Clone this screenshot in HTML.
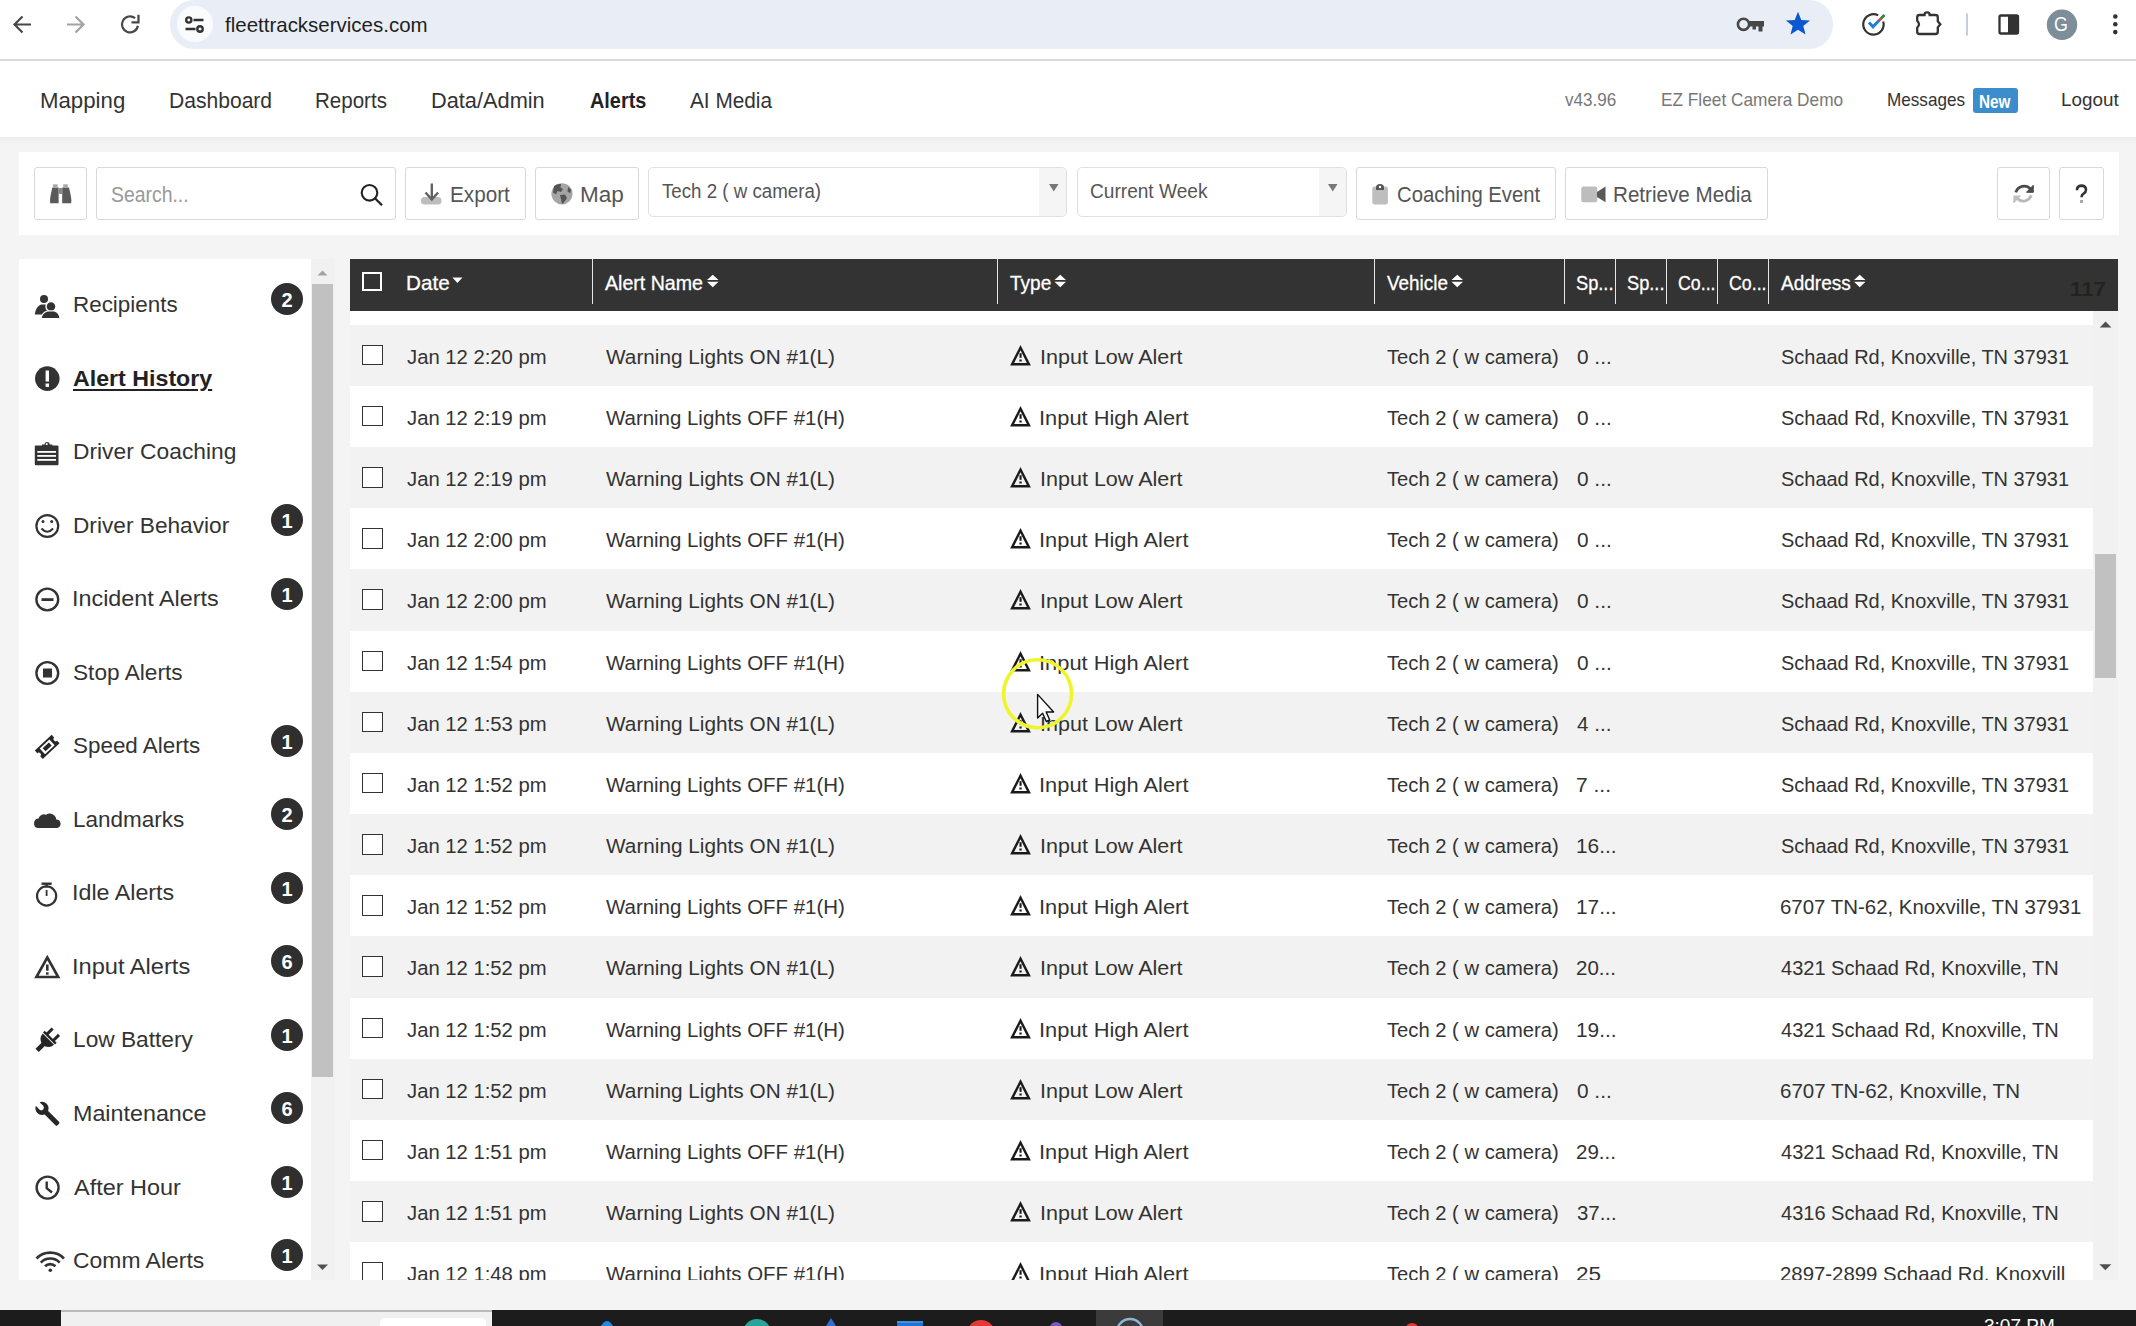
<!DOCTYPE html>
<html><head><meta charset="utf-8">
<style>
*{box-sizing:border-box;margin:0;padding:0}
html,body{width:2136px;height:1326px;overflow:hidden;background:#f4f4f4;font-family:"Liberation Sans",sans-serif;color:#333}
.a{position:absolute}
.t{position:absolute;white-space:nowrap;line-height:1;transform-origin:0 0}
.btn{position:absolute;top:167px;height:53px;background:#fff;border:1.5px solid #d9d9d9;border-radius:3px}
.sel{position:absolute;top:167px;height:50px;background:#fff;border:1.5px solid #e0e0e0;border-radius:5px;overflow:hidden}
.bd{position:absolute;left:271px;width:32px;height:32px;border-radius:50%;background:#2f2f2f;color:#fff;font-weight:bold;font-size:20px;line-height:35px;text-align:center}
.cb{position:absolute;left:362px;width:20.5px;height:20.5px;border:1.6px solid #333;background:#fff}

</style></head><body>
<div class="a" style="left:0;top:0;width:2136px;height:59px;background:#fff"></div>
<div class="a" style="left:170px;top:0px;width:1663px;height:49px;background:#e9eef6;border-radius:24px"></div>
<div class="a" style="left:0;top:59px;width:2136px;height:2px;background:#d9dadc"></div>
<div class="a" style="left:176.5px;top:6.2px;width:36px;height:36px;border-radius:50%;background:#fafbfd"></div>
<svg class="a" style="left:0;top:0" width="2136" height="59" viewBox="0 0 2136 59">
 <g fill="none" stroke-linecap="butt" stroke-linejoin="miter">
  <path d="M31 24.5 H14.5 M22.5 16.5 L14.5 24.5 L22.5 32.5" stroke="#474747" stroke-width="2.2"/>
  <path d="M67 24.5 H83.5 M75.5 16.5 L83.5 24.5 L75.5 32.5" stroke="#a3a3a3" stroke-width="2.2"/>
  <path d="M137.9 25.7 A8 8 0 1 1 135.1 18.2" stroke="#474747" stroke-width="2.2"/>
  <path d="M131.5 22.4 H138.5 V14.8" stroke="#474747" stroke-width="2.2"/>
  <circle cx="188.8" cy="20" r="2.6" stroke="#333" stroke-width="2.4"/>
  <path d="M193.5 20 H203.5 M185.5 29 H195.5" stroke="#333" stroke-width="2.5"/>
  <circle cx="200" cy="29" r="2.7" stroke="#333" stroke-width="2.4"/>
  <circle cx="1743.5" cy="24.3" r="5.6" stroke="#474747" stroke-width="2.6"/>
  <path d="M1883.2 21.5 A10.2 10.2 0 1 1 1878.2 15.4" stroke="#333" stroke-width="2.2"/>
  <path d="M1919.5 15 H1924.5 A2.6 2.6 0 0 1 1929.7 15 H1935.5 Q1937.8 15 1937.8 17.3 V21.3 L1940.3 24.3 L1937.8 27.3 V31.8 Q1937.8 34 1935.5 34 H1919.5 Q1917.2 34 1917.2 31.8 V27.8 Q1920.8 24.3 1917.2 20.8 V17.3 Q1917.2 15 1919.5 15 Z" stroke="#333" stroke-width="2.3"/>
  <rect x="1999.5" y="15.5" width="18.5" height="18" rx="1.5" stroke="#333" stroke-width="2.3"/>
 </g>
 <path d="M1749 21 H1764 V26.5 H1762.5 V31.5 H1758.5 V26.5 H1756 V29.5 H1752.5 V26.5 H1749 Z" fill="#474747"/>
 <path d="M1798 11.8 L1801.3 20.1 L1810 20.5 L1803.3 26.1 L1805.5 34.6 L1798 29.8 L1790.5 34.6 L1792.7 26.1 L1786 20.5 L1794.7 20.1 Z" fill="#0b57d0"/>
 <path d="M1869 22.5 L1873 26.8 L1879 20.5" fill="none" stroke="#1a80d8" stroke-width="3"/>
 <path d="M1878.6 21 L1881.5 18" fill="none" stroke="#c0504d" stroke-width="2.8"/>
 <path d="M1881.2 18.3 L1884.6 15" fill="none" stroke="#2e8b3a" stroke-width="2.8"/>
 <rect x="1966" y="13.5" width="2" height="22" fill="#c4cfde"/>
 <rect x="2008" y="15.5" width="11" height="18" fill="#333"/>
 <circle cx="2062" cy="24.8" r="15.2" fill="#7b8e9a"/>
 <circle cx="2115.3" cy="16.5" r="2.3" fill="#333"/>
 <circle cx="2115.3" cy="24.3" r="2.3" fill="#333"/>
 <circle cx="2115.3" cy="32.1" r="2.3" fill="#333"/>
</svg>
<div class="t" style="left:2053.5px;top:13px;font-size:21px;color:#fff;transform:scaleX(0.85)">G</div>

<div class="t" style="left:224.71px;top:13.92px;font-size:21px;color:#1f1f1f;transform:scaleX(0.9755);">fleettrackservices.com</div>
<div class="a" style="left:0;top:61px;width:2136px;height:76px;background:#fff"></div>
<div class="a" style="left:0;top:137px;width:2136px;height:6px;background:linear-gradient(#ececec,#f4f4f4)"></div>
<div class="t" style="left:40.18px;top:91.00px;font-size:21.5px;color:#333;transform:scaleX(1.0337);">Mapping</div>
<div class="t" style="left:169.27px;top:91.00px;font-size:21.5px;color:#333;transform:scaleX(0.9801);">Dashboard</div>
<div class="t" style="left:315.31px;top:91.00px;font-size:21.5px;color:#333;transform:scaleX(0.9554);">Reports</div>
<div class="t" style="left:431.21px;top:91.00px;font-size:21.5px;color:#333;transform:scaleX(1.0122);">Data/Admin</div>
<div class="t" style="left:589.51px;top:91.00px;font-size:21.5px;color:#222;font-weight:bold;transform:scaleX(0.9240);">Alerts</div>
<div class="t" style="left:690.46px;top:91.00px;font-size:21.5px;color:#333;transform:scaleX(0.9669);">AI Media</div>
<div class="t" style="left:1565.44px;top:90.22px;font-size:19px;color:#777;transform:scaleX(0.8994);">v43.96</div>
<div class="t" style="left:1660.58px;top:90.22px;font-size:19px;color:#777;transform:scaleX(0.9079);">EZ Fleet Camera Demo</div>
<div class="t" style="left:1887.10px;top:90.22px;font-size:19px;color:#333;transform:scaleX(0.9010);">Messages</div>
<div class="t" style="left:2061.45px;top:90.22px;font-size:19px;color:#333;transform:scaleX(0.9926);">Logout</div>
<div class="a" style="left:1973px;top:88px;width:45px;height:25px;background:#3c8dcb;border-radius:3px"></div>
<div class="t" style="left:1979.48px;top:93.26px;font-size:18px;color:#fff;font-weight:bold;transform:scaleX(0.8510);">New</div>
<div class="a" style="left:18.5px;top:152px;width:2100.5px;height:83px;background:#fff"></div>
<div class="btn" style="left:34px;width:53px"></div>
<div class="btn" style="left:96px;width:300px"></div>
<div class="btn" style="left:405px;width:121px"></div>
<div class="btn" style="left:535px;width:104px"></div>
<div class="btn" style="left:1356px;width:200px"></div>
<div class="btn" style="left:1565px;width:203px"></div>
<div class="btn" style="left:1997px;width:53px"></div>
<div class="btn" style="left:2059px;width:45px"></div>
<div class="sel" style="left:648px;width:419px"><div class="a" style="right:0;top:0;width:27px;height:100%;background:#f5f5f5;border-radius:0 5px 5px 0"></div></div>
<div class="sel" style="left:1077px;width:270px"><div class="a" style="right:0;top:0;width:27px;height:100%;background:#f5f5f5;border-radius:0 5px 5px 0"></div></div>
<svg class="a" style="left:0;top:150px" width="2136" height="80" viewBox="0 150 2136 80">
 <!-- binoculars -->
 <path d="M52.3 187.5 H58.6 V203.2 H50.2 Q49.8 200 50.5 196 Z" fill="#5a5a5a"/>
 <path d="M69 187.5 H62.2 V203.2 H71.2 Q71.6 200 70.9 196 Z" fill="#5a5a5a"/>
 <rect x="58.4" y="188" width="4" height="6" fill="#8a8a8a"/>
 <rect x="53" y="184.3" width="4.6" height="3.5" fill="#a8a8a8"/>
 <rect x="63.2" y="184.3" width="4.6" height="3.5" fill="#a8a8a8"/>
 <!-- search -->
 <circle cx="369.5" cy="192.8" r="7.8" fill="none" stroke="#222" stroke-width="2.1"/>
 <path d="M375.2 198.5 L382 205.3" stroke="#222" stroke-width="2.3"/>
 <!-- export -->
 <rect x="421" y="197" width="20.5" height="7.5" rx="3.5" fill="#bdbdbd"/>
 <path d="M431.8 183.5 V198" stroke="#626262" stroke-width="2.4"/>
 <path d="M425.5 192.5 L431.8 199.5 L438.1 192.5" fill="none" stroke="#626262" stroke-width="2.4"/>
 <!-- globe -->
 <circle cx="562" cy="193.8" r="10.6" fill="#a5a5a5"/>
 <path d="M554 186 Q557 183.5 561 184 L560.5 187.5 L563 189 L561 192 L557.5 191 L556 194.5 L553 192.5 Z" fill="#555"/>
 <path d="M560 195 L565 194.5 L567 198 L563.5 203 L562 204 L561 199 Z" fill="#555"/>
 <path d="M568 187 L571 189.5 L570.5 193 L567.5 192 Z" fill="#555"/>
 <!-- select arrows -->
 <path d="M1049 184 H1058.5 L1053.75 191.5 Z" fill="#777"/>
 <path d="M1328 184 H1337.5 L1332.75 191.5 Z" fill="#777"/>
 <!-- clipboard -->
 <rect x="1372.3" y="186.5" width="15.6" height="18" rx="2.2" fill="#bebebe"/>
 <path d="M1376 190 V187.5 Q1376 184 1380 184 Q1384 184 1384 187.5 V190 Z" fill="#555"/>
 <circle cx="1380" cy="187" r="1.2" fill="#fff"/>
 <!-- video -->
 <rect x="1581.3" y="186.5" width="16" height="15.7" rx="2" fill="#bdbdbd"/>
 <path d="M1597 192 L1605.5 186.5 V202.2 L1597 197 Z" fill="#595959"/>
 <!-- refresh -->
 <path d="M2015.8 192.3 A8.6 8.6 0 0 1 2030.5 189" fill="none" stroke="#4a4a4a" stroke-width="2.8"/>
 <path d="M2026.5 192.3 L2033.3 192.3 L2033.3 185.2 Z" fill="#4a4a4a" stroke="#4a4a4a" stroke-width="1"/>
 <path d="M2031.3 195.2 A8.6 8.6 0 0 1 2017.2 198.6" fill="none" stroke="#b8b8b8" stroke-width="2.8"/>
 <path d="M2020.3 196 L2013.8 196 L2013.8 202.8 Z" fill="#c0c0c0" stroke="#c0c0c0" stroke-width="1"/>
 <!-- help -->
 <path d="M2077 190.2 Q2076.8 185.8 2081.2 185.6 Q2086 185.6 2086 189.8 Q2086 192.2 2083.6 193.6 Q2081.5 194.8 2081.5 197.3" fill="none" stroke="#333" stroke-width="2.6"/>
 <rect x="2080" y="200" width="3" height="3" fill="#aaa"/>
 </svg>


<div class="t" style="left:111.12px;top:185.10px;font-size:21.5px;color:#999;transform:scaleX(0.9025);">Search...</div>
<div class="t" style="left:450.30px;top:185.10px;font-size:21.5px;color:#555;transform:scaleX(0.9632);">Export</div>
<div class="t" style="left:580.15px;top:185.10px;font-size:21.5px;color:#555;transform:scaleX(1.0470);">Map</div>
<div class="t" style="left:661.58px;top:180.77px;font-size:20px;color:#555;transform:scaleX(0.9355);">Tech 2 ( w camera)</div>
<div class="t" style="left:1090.03px;top:180.77px;font-size:20px;color:#555;transform:scaleX(0.9547);">Current Week</div>
<div class="t" style="left:1396.97px;top:184.70px;font-size:21.5px;color:#555;transform:scaleX(0.9433);">Coaching Event</div>
<div class="t" style="left:1613.31px;top:184.70px;font-size:21.5px;color:#555;transform:scaleX(0.9592);">Retrieve Media</div>
<div class="a" style="left:19px;top:259px;width:292px;height:1021px;background:#fff"></div>
<div class="a" style="left:311px;top:259px;width:24px;height:1021px;background:#f1f1f1"></div>
<div class="a" style="left:312px;top:284px;width:21px;height:793px;background:#c1c1c1"></div>
<div class="t" style="left:72.66px;top:294.08px;font-size:22px;color:#333;transform:scaleX(1.0188);">Recipients</div>
<div class="bd" style="top:283.3px">2</div>
<div class="t" style="left:73.42px;top:367.62px;font-size:22px;color:#222;font-weight:bold;transform:scaleX(1.0543);text-decoration:underline;text-decoration-thickness:2px;text-underline-offset:3px;">Alert History</div>
<div class="t" style="left:72.63px;top:441.16px;font-size:22px;color:#333;transform:scaleX(1.0356);">Driver Coaching</div>
<div class="t" style="left:72.64px;top:514.70px;font-size:22px;color:#333;transform:scaleX(1.0306);">Driver Behavior</div>
<div class="bd" style="top:503.9px">1</div>
<div class="t" style="left:72.34px;top:588.24px;font-size:22px;color:#333;transform:scaleX(1.0617);">Incident Alerts</div>
<div class="bd" style="top:577.5px">1</div>
<div class="t" style="left:73.47px;top:661.78px;font-size:22px;color:#333;transform:scaleX(1.0301);">Stop Alerts</div>
<div class="t" style="left:73.48px;top:735.32px;font-size:22px;color:#333;transform:scaleX(1.0188);">Speed Alerts</div>
<div class="bd" style="top:724.5px">1</div>
<div class="t" style="left:72.66px;top:808.86px;font-size:22px;color:#333;transform:scaleX(1.0214);">Landmarks</div>
<div class="bd" style="top:798.1px">2</div>
<div class="t" style="left:72.35px;top:882.40px;font-size:22px;color:#333;transform:scaleX(1.0580);">Idle Alerts</div>
<div class="bd" style="top:871.6px">1</div>
<div class="t" style="left:72.32px;top:955.94px;font-size:22px;color:#333;transform:scaleX(1.0742);">Input Alerts</div>
<div class="bd" style="top:945.2px">6</div>
<div class="t" style="left:72.64px;top:1029.48px;font-size:22px;color:#333;transform:scaleX(1.0322);">Low Battery</div>
<div class="bd" style="top:1018.7px">1</div>
<div class="t" style="left:72.59px;top:1103.02px;font-size:22px;color:#333;transform:scaleX(1.0593);">Maintenance</div>
<div class="bd" style="top:1092.2px">6</div>
<div class="t" style="left:74.45px;top:1176.56px;font-size:22px;color:#333;transform:scaleX(1.0666);">After Hour</div>
<div class="bd" style="top:1165.8px">1</div>
<div class="t" style="left:73.34px;top:1250.10px;font-size:22px;color:#333;transform:scaleX(1.0422);">Comm Alerts</div>
<div class="bd" style="top:1239.3px">1</div>
<svg class="a" style="left:0;top:0" width="340" height="1290" viewBox="0 0 340 1290">
 <!-- scrollbar arrows -->
 <path d="M317.5 275.5 L322.5 270.5 L327.5 275.5 Z" fill="#a3a3a3"/>
 <path d="M317 1264.5 H328 L322.5 1270 Z" fill="#505050"/>
 <!-- recipients -->
 <g fill="#333">
  <circle cx="44" cy="299" r="4"/>
  <path d="M34.8 314.5 Q35.5 307 41 304.5 L47 304.5 Q50 306 51 309 L45 314.5 Z"/>
  <circle cx="51" cy="306.5" r="5" stroke="#fff" stroke-width="1.4"/>
  <path d="M41 318.5 Q42 312.5 47.5 311 L54.5 311 Q59.5 312.5 60 318.5 Z" stroke="#fff" stroke-width="1.2"/>
 </g>
 <!-- alert history -->
 <circle cx="47.3" cy="378.6" r="12.3" fill="#333"/>
 <rect x="45.6" y="370.5" width="3.4" height="11" fill="#fff"/>
 <rect x="45.6" y="383.5" width="3.4" height="3.4" fill="#fff"/>
 <!-- driver coaching clipboard -->
 <rect x="34.8" y="445.5" width="23.7" height="19.7" rx="1" fill="#333"/>
 <path d="M42 447.5 V444.5 H44.5 A2.6 2.6 0 0 1 49.7 444.5 H52.3 V447.5 Z" fill="#333"/>
 <rect x="45.8" y="443.2" width="1.8" height="1.8" fill="#fff"/>
 <rect x="37.3" y="451" width="18.7" height="1.8" fill="#fff"/>
 <rect x="37.3" y="455" width="18.7" height="1.8" fill="#fff"/>
 <rect x="37.3" y="459" width="18.7" height="1.8" fill="#fff"/>
 <!-- smiley -->
 <circle cx="47.3" cy="526" r="10.9" fill="none" stroke="#333" stroke-width="2.2"/>
 <circle cx="43" cy="521.6" r="1.5" fill="#333"/>
 <circle cx="51.7" cy="521.6" r="1.5" fill="#333"/>
 <path d="M41.5 528.5 Q47.3 535 53.1 528.5" fill="none" stroke="#333" stroke-width="2"/>
 <!-- incident minus -->
 <circle cx="47.3" cy="599.5" r="10.9" fill="none" stroke="#333" stroke-width="2.4"/>
 <rect x="41.5" y="598.2" width="12" height="2.8" fill="#333"/>
 <!-- stop -->
 <circle cx="47.3" cy="673" r="10.9" fill="none" stroke="#333" stroke-width="2.4"/>
 <rect x="43" y="668.5" width="9" height="9" fill="#333"/>
 <!-- speed ticket -->
 <g transform="translate(47.2 746.9) rotate(-43)">
  <path d="M-11.5 -5.8 H11.5 V-2.2 A2.2 2.2 0 0 0 11.5 2.2 V5.8 H-11.5 V2.2 A2.2 2.2 0 0 0 -11.5 -2.2 Z" fill="#262626"/>
  <rect x="-6.6" y="-3.9" width="13.2" height="7.8" fill="#fff"/>
  <rect x="-4.2" y="-2.1" width="8.4" height="4.2" fill="#262626"/>
 </g>
 <!-- cloud -->
 <path d="M37.5 828 A4.8 4.8 0 0 1 38.5 818.6 A5.5 5.5 0 0 1 46 814.8 A6.5 6.5 0 0 1 56.3 819.5 A4.3 4.3 0 0 1 57.2 828 Z" fill="#333"/>
 <!-- stopwatch -->
 <circle cx="46.6" cy="896" r="9.6" fill="none" stroke="#333" stroke-width="2.2"/>
 <rect x="41.5" y="882.5" width="10.2" height="2.4" fill="#333"/>
 <rect x="45.5" y="884" width="2.2" height="3.5" fill="#333"/>
 <rect x="45.7" y="890" width="1.8" height="6" fill="#333"/>
 <!-- input warning -->
 <path d="M47.3 957.5 L58.2 977 H36.4 Z" fill="none" stroke="#333" stroke-width="2.6" stroke-linejoin="miter"/>
 <rect x="46" y="964.5" width="2.6" height="6.2" fill="#333"/>
 <rect x="46" y="972.3" width="2.6" height="2.4" fill="#333"/>
 <!-- plug -->
 <g transform="translate(47 1040.5) rotate(45)">
  <path d="M-8 -2 H8 A8 8 0 0 1 -8 -2 Z" fill="#262626"/>
  <rect x="-8.5" y="-5.2" width="17" height="2.4" fill="#262626"/>
  <rect x="-6" y="-12.5" width="3" height="8" fill="#262626"/>
  <rect x="3" y="-12.5" width="3" height="8" fill="#262626"/>
  <rect x="-2.3" y="5" width="4.6" height="9" fill="#262626"/>
 </g>
 <!-- wrench -->
 <g transform="translate(42 1108.3) rotate(-45)">
  <circle cx="0" cy="0" r="6.6" fill="#262626"/>
  <rect x="-2.5" y="3" width="5" height="20" rx="1.5" fill="#262626"/>
  <rect x="-2.6" y="-8" width="5.2" height="7" fill="#fff"/>
  <circle cx="0" cy="-1" r="2.6" fill="#fff"/>
 </g>
 <!-- clock -->
 <circle cx="47.6" cy="1187.6" r="11" fill="none" stroke="#333" stroke-width="2.4"/>
 <path d="M46.7 1181.5 V1188.2 L52 1192.5" fill="none" stroke="#333" stroke-width="2.4"/>
 <!-- wifi -->
 <g fill="none" stroke="#333" stroke-width="2.6" stroke-linecap="butt">
  <path d="M36.5 1258.5 A19 19 0 0 1 64 1258.5"/>
  <path d="M40.8 1262.6 A13 13 0 0 1 59.7 1262.6"/>
  <path d="M45 1266.3 A7.5 7.5 0 0 1 55.5 1266.3"/>
 </g>
 <circle cx="50.3" cy="1270.2" r="1.8" fill="#333"/>
</svg>

<div class="a" style="left:350px;top:259px;width:1768px;height:52px;background:#333"></div>
<div class="a" style="left:591.65px;top:259px;width:1.5px;height:45px;background:#e6e6e6"></div>
<div class="a" style="left:996.55px;top:259px;width:1.5px;height:45px;background:#e6e6e6"></div>
<div class="a" style="left:1373.65px;top:259px;width:1.5px;height:45px;background:#e6e6e6"></div>
<div class="a" style="left:1563.75px;top:259px;width:1.5px;height:45px;background:#e6e6e6"></div>
<div class="a" style="left:1614.65px;top:259px;width:1.5px;height:45px;background:#e6e6e6"></div>
<div class="a" style="left:1665.75px;top:259px;width:1.5px;height:45px;background:#e6e6e6"></div>
<div class="a" style="left:1716.65px;top:259px;width:1.5px;height:45px;background:#e6e6e6"></div>
<div class="a" style="left:1767.65px;top:259px;width:1.5px;height:45px;background:#e6e6e6"></div>
<div class="a" style="left:362px;top:271.5px;width:20px;height:19.5px;border:2px solid #fff"></div>
<div class="t" style="left:406.01px;top:271.52px;font-size:21px;color:#fff;transform:scaleX(0.9832);-webkit-text-stroke:0.3px #fff;">Date</div>
<div class="t" style="left:605.46px;top:271.52px;font-size:21px;color:#fff;transform:scaleX(0.9322);-webkit-text-stroke:0.3px #fff;">Alert Name</div>
<div class="t" style="left:1010.07px;top:271.52px;font-size:21px;color:#fff;transform:scaleX(0.9066);-webkit-text-stroke:0.3px #fff;">Type</div>
<div class="t" style="left:1386.92px;top:271.52px;font-size:21px;color:#fff;transform:scaleX(0.8997);-webkit-text-stroke:0.3px #fff;">Vehicle</div>
<div class="t" style="left:1576.17px;top:271.52px;font-size:21px;color:#fff;transform:scaleX(0.8681);-webkit-text-stroke:0.3px #fff;">Sp...</div>
<div class="t" style="left:1627.17px;top:271.52px;font-size:21px;color:#fff;transform:scaleX(0.8681);-webkit-text-stroke:0.3px #fff;">Sp...</div>
<div class="t" style="left:1678.10px;top:271.52px;font-size:21px;color:#fff;transform:scaleX(0.8461);-webkit-text-stroke:0.3px #fff;">Co...</div>
<div class="t" style="left:1729.10px;top:271.52px;font-size:21px;color:#fff;transform:scaleX(0.8461);-webkit-text-stroke:0.3px #fff;">Co...</div>
<div class="t" style="left:1781.36px;top:271.52px;font-size:21px;color:#fff;transform:scaleX(0.9051);-webkit-text-stroke:0.3px #fff;">Address</div>
<div class="t" style="left:2070.10px;top:278.32px;font-size:21px;color:#222;font-weight:bold;transform:scaleX(1.0590);">117</div>
<svg class="a" style="left:0;top:259px" width="2136" height="52" viewBox="0 259 2136 52">
 <g fill="#fff">
 <path d="M452.4 277.4 H462.5 L457.45 283 Z"/>
 <path d="M707 280 L712.75 274.8 L718.5 280 Z M707 281.8 H718.5 L712.75 287.3 Z"/>
 <path d="M1054.5 280 L1060.25 274.8 L1066 280 Z M1054.5 281.8 H1066 L1060.25 287.3 Z"/>
 <path d="M1451.5 280 L1457.25 274.8 L1463 280 Z M1451.5 281.8 H1463 L1457.25 287.3 Z"/>
 <path d="M1854 280 L1859.75 274.8 L1865.5 280 Z M1854 281.8 H1865.5 L1859.75 287.3 Z"/>
 </g>
</svg>

<div class="a" style="left:350px;top:311px;width:1743px;height:969px;background:#fff"></div>
<div class="a" style="left:2093px;top:311px;width:25px;height:969px;background:#f1f1f1"></div>
<div class="a" style="left:2095px;top:554px;width:21px;height:124px;background:#c1c1c1"></div>
<svg class="a" style="left:2090px;top:315px" width="30" height="960" viewBox="2090 315 30 960"><path d="M2099.8 327.5 L2105.6 321.5 L2111.4 327.5 Z" fill="#505050"/><path d="M2099.4 1264.2 H2111.3 L2105.35 1270.3 Z" fill="#505050"/></svg>
<div class="a" style="left:350px;top:324.70px;width:1743px;height:61.17px;background:#f2f2f2"></div>
<div class="cb" style="top:344.70px"></div>
<div class="t" style="left:406.68px;top:346.65px;font-size:20.5px;color:#333;transform:scaleX(0.9882);">Jan 12 2:20 pm</div>
<div class="t" style="left:605.91px;top:346.65px;font-size:20.5px;color:#333;transform:scaleX(1.0129);">Warning Lights ON #1(L)</div>
<div class="t" style="left:1039.51px;top:346.65px;font-size:20.5px;color:#333;transform:scaleX(1.0505);">Input Low Alert</div>
<svg class="a" style="left:1008px;top:342.70px" width="26" height="24" viewBox="0 0 26 24"><path fill-rule="evenodd" d="M12.5 2.1 L22.9 22.4 H2.1 Z M12.5 7.3 L6.1 19.9 H18.9 Z" fill="#1a1a1a"/><rect x="11.5" y="10.2" width="2.1" height="4.6" fill="#1a1a1a"/><rect x="11.4" y="16.5" width="2.3" height="2" fill="#1a1a1a"/></svg>
<div class="t" style="left:1386.55px;top:346.65px;font-size:20.5px;color:#333;transform:scaleX(0.9851);">Tech 2 ( w camera)</div>
<div class="t" style="left:1576.69px;top:346.65px;font-size:20.5px;color:#333;transform:scaleX(1.0155);">0 ...</div>
<div class="t" style="left:1780.59px;top:346.65px;font-size:20.5px;color:#333;transform:scaleX(0.9733);">Schaad Rd, Knoxville, TN 37931</div>
<div class="cb" style="top:405.87px"></div>
<div class="t" style="left:406.68px;top:407.82px;font-size:20.5px;color:#333;transform:scaleX(0.9882);">Jan 12 2:19 pm</div>
<div class="t" style="left:605.91px;top:407.82px;font-size:20.5px;color:#333;transform:scaleX(0.9968);">Warning Lights OFF #1(H)</div>
<div class="t" style="left:1039.48px;top:407.82px;font-size:20.5px;color:#333;transform:scaleX(1.0664);">Input High Alert</div>
<svg class="a" style="left:1008px;top:403.87px" width="26" height="24" viewBox="0 0 26 24"><path fill-rule="evenodd" d="M12.5 2.1 L22.9 22.4 H2.1 Z M12.5 7.3 L6.1 19.9 H18.9 Z" fill="#1a1a1a"/><rect x="11.5" y="10.2" width="2.1" height="4.6" fill="#1a1a1a"/><rect x="11.4" y="16.5" width="2.3" height="2" fill="#1a1a1a"/></svg>
<div class="t" style="left:1386.55px;top:407.82px;font-size:20.5px;color:#333;transform:scaleX(0.9851);">Tech 2 ( w camera)</div>
<div class="t" style="left:1576.69px;top:407.82px;font-size:20.5px;color:#333;transform:scaleX(1.0155);">0 ...</div>
<div class="t" style="left:1780.59px;top:407.82px;font-size:20.5px;color:#333;transform:scaleX(0.9733);">Schaad Rd, Knoxville, TN 37931</div>
<div class="a" style="left:350px;top:447.04px;width:1743px;height:61.17px;background:#f2f2f2"></div>
<div class="cb" style="top:467.04px"></div>
<div class="t" style="left:406.68px;top:468.99px;font-size:20.5px;color:#333;transform:scaleX(0.9882);">Jan 12 2:19 pm</div>
<div class="t" style="left:605.91px;top:468.99px;font-size:20.5px;color:#333;transform:scaleX(1.0129);">Warning Lights ON #1(L)</div>
<div class="t" style="left:1039.51px;top:468.99px;font-size:20.5px;color:#333;transform:scaleX(1.0505);">Input Low Alert</div>
<svg class="a" style="left:1008px;top:465.04px" width="26" height="24" viewBox="0 0 26 24"><path fill-rule="evenodd" d="M12.5 2.1 L22.9 22.4 H2.1 Z M12.5 7.3 L6.1 19.9 H18.9 Z" fill="#1a1a1a"/><rect x="11.5" y="10.2" width="2.1" height="4.6" fill="#1a1a1a"/><rect x="11.4" y="16.5" width="2.3" height="2" fill="#1a1a1a"/></svg>
<div class="t" style="left:1386.55px;top:468.99px;font-size:20.5px;color:#333;transform:scaleX(0.9851);">Tech 2 ( w camera)</div>
<div class="t" style="left:1576.69px;top:468.99px;font-size:20.5px;color:#333;transform:scaleX(1.0155);">0 ...</div>
<div class="t" style="left:1780.59px;top:468.99px;font-size:20.5px;color:#333;transform:scaleX(0.9733);">Schaad Rd, Knoxville, TN 37931</div>
<div class="cb" style="top:528.21px"></div>
<div class="t" style="left:406.68px;top:530.16px;font-size:20.5px;color:#333;transform:scaleX(0.9882);">Jan 12 2:00 pm</div>
<div class="t" style="left:605.91px;top:530.16px;font-size:20.5px;color:#333;transform:scaleX(0.9968);">Warning Lights OFF #1(H)</div>
<div class="t" style="left:1039.48px;top:530.16px;font-size:20.5px;color:#333;transform:scaleX(1.0664);">Input High Alert</div>
<svg class="a" style="left:1008px;top:526.21px" width="26" height="24" viewBox="0 0 26 24"><path fill-rule="evenodd" d="M12.5 2.1 L22.9 22.4 H2.1 Z M12.5 7.3 L6.1 19.9 H18.9 Z" fill="#1a1a1a"/><rect x="11.5" y="10.2" width="2.1" height="4.6" fill="#1a1a1a"/><rect x="11.4" y="16.5" width="2.3" height="2" fill="#1a1a1a"/></svg>
<div class="t" style="left:1386.55px;top:530.16px;font-size:20.5px;color:#333;transform:scaleX(0.9851);">Tech 2 ( w camera)</div>
<div class="t" style="left:1576.69px;top:530.16px;font-size:20.5px;color:#333;transform:scaleX(1.0155);">0 ...</div>
<div class="t" style="left:1780.59px;top:530.16px;font-size:20.5px;color:#333;transform:scaleX(0.9733);">Schaad Rd, Knoxville, TN 37931</div>
<div class="a" style="left:350px;top:569.38px;width:1743px;height:61.17px;background:#f2f2f2"></div>
<div class="cb" style="top:589.38px"></div>
<div class="t" style="left:406.68px;top:591.33px;font-size:20.5px;color:#333;transform:scaleX(0.9882);">Jan 12 2:00 pm</div>
<div class="t" style="left:605.91px;top:591.33px;font-size:20.5px;color:#333;transform:scaleX(1.0129);">Warning Lights ON #1(L)</div>
<div class="t" style="left:1039.51px;top:591.33px;font-size:20.5px;color:#333;transform:scaleX(1.0505);">Input Low Alert</div>
<svg class="a" style="left:1008px;top:587.38px" width="26" height="24" viewBox="0 0 26 24"><path fill-rule="evenodd" d="M12.5 2.1 L22.9 22.4 H2.1 Z M12.5 7.3 L6.1 19.9 H18.9 Z" fill="#1a1a1a"/><rect x="11.5" y="10.2" width="2.1" height="4.6" fill="#1a1a1a"/><rect x="11.4" y="16.5" width="2.3" height="2" fill="#1a1a1a"/></svg>
<div class="t" style="left:1386.55px;top:591.33px;font-size:20.5px;color:#333;transform:scaleX(0.9851);">Tech 2 ( w camera)</div>
<div class="t" style="left:1576.69px;top:591.33px;font-size:20.5px;color:#333;transform:scaleX(1.0155);">0 ...</div>
<div class="t" style="left:1780.59px;top:591.33px;font-size:20.5px;color:#333;transform:scaleX(0.9733);">Schaad Rd, Knoxville, TN 37931</div>
<div class="cb" style="top:650.55px"></div>
<div class="t" style="left:406.68px;top:652.50px;font-size:20.5px;color:#333;transform:scaleX(0.9882);">Jan 12 1:54 pm</div>
<div class="t" style="left:605.91px;top:652.50px;font-size:20.5px;color:#333;transform:scaleX(0.9968);">Warning Lights OFF #1(H)</div>
<div class="t" style="left:1039.48px;top:652.50px;font-size:20.5px;color:#333;transform:scaleX(1.0664);">Input High Alert</div>
<svg class="a" style="left:1008px;top:648.55px" width="26" height="24" viewBox="0 0 26 24"><path fill-rule="evenodd" d="M12.5 2.1 L22.9 22.4 H2.1 Z M12.5 7.3 L6.1 19.9 H18.9 Z" fill="#1a1a1a"/><rect x="11.5" y="10.2" width="2.1" height="4.6" fill="#1a1a1a"/><rect x="11.4" y="16.5" width="2.3" height="2" fill="#1a1a1a"/></svg>
<div class="t" style="left:1386.55px;top:652.50px;font-size:20.5px;color:#333;transform:scaleX(0.9851);">Tech 2 ( w camera)</div>
<div class="t" style="left:1576.69px;top:652.50px;font-size:20.5px;color:#333;transform:scaleX(1.0155);">0 ...</div>
<div class="t" style="left:1780.59px;top:652.50px;font-size:20.5px;color:#333;transform:scaleX(0.9733);">Schaad Rd, Knoxville, TN 37931</div>
<div class="a" style="left:350px;top:691.72px;width:1743px;height:61.17px;background:#f2f2f2"></div>
<div class="cb" style="top:711.72px"></div>
<div class="t" style="left:406.68px;top:713.67px;font-size:20.5px;color:#333;transform:scaleX(0.9882);">Jan 12 1:53 pm</div>
<div class="t" style="left:605.91px;top:713.67px;font-size:20.5px;color:#333;transform:scaleX(1.0129);">Warning Lights ON #1(L)</div>
<div class="t" style="left:1039.51px;top:713.67px;font-size:20.5px;color:#333;transform:scaleX(1.0505);">Input Low Alert</div>
<svg class="a" style="left:1008px;top:709.72px" width="26" height="24" viewBox="0 0 26 24"><path fill-rule="evenodd" d="M12.5 2.1 L22.9 22.4 H2.1 Z M12.5 7.3 L6.1 19.9 H18.9 Z" fill="#1a1a1a"/><rect x="11.5" y="10.2" width="2.1" height="4.6" fill="#1a1a1a"/><rect x="11.4" y="16.5" width="2.3" height="2" fill="#1a1a1a"/></svg>
<div class="t" style="left:1386.55px;top:713.67px;font-size:20.5px;color:#333;transform:scaleX(0.9851);">Tech 2 ( w camera)</div>
<div class="t" style="left:1577.03px;top:713.67px;font-size:20.5px;color:#333;transform:scaleX(1.0050);">4 ...</div>
<div class="t" style="left:1780.59px;top:713.67px;font-size:20.5px;color:#333;transform:scaleX(0.9733);">Schaad Rd, Knoxville, TN 37931</div>
<div class="cb" style="top:772.89px"></div>
<div class="t" style="left:406.68px;top:774.84px;font-size:20.5px;color:#333;transform:scaleX(0.9882);">Jan 12 1:52 pm</div>
<div class="t" style="left:605.91px;top:774.84px;font-size:20.5px;color:#333;transform:scaleX(0.9968);">Warning Lights OFF #1(H)</div>
<div class="t" style="left:1039.48px;top:774.84px;font-size:20.5px;color:#333;transform:scaleX(1.0664);">Input High Alert</div>
<svg class="a" style="left:1008px;top:770.89px" width="26" height="24" viewBox="0 0 26 24"><path fill-rule="evenodd" d="M12.5 2.1 L22.9 22.4 H2.1 Z M12.5 7.3 L6.1 19.9 H18.9 Z" fill="#1a1a1a"/><rect x="11.5" y="10.2" width="2.1" height="4.6" fill="#1a1a1a"/><rect x="11.4" y="16.5" width="2.3" height="2" fill="#1a1a1a"/></svg>
<div class="t" style="left:1386.55px;top:774.84px;font-size:20.5px;color:#333;transform:scaleX(0.9851);">Tech 2 ( w camera)</div>
<div class="t" style="left:1576.42px;top:774.84px;font-size:20.5px;color:#333;transform:scaleX(1.0237);">7 ...</div>
<div class="t" style="left:1780.59px;top:774.84px;font-size:20.5px;color:#333;transform:scaleX(0.9733);">Schaad Rd, Knoxville, TN 37931</div>
<div class="a" style="left:350px;top:814.06px;width:1743px;height:61.17px;background:#f2f2f2"></div>
<div class="cb" style="top:834.06px"></div>
<div class="t" style="left:406.68px;top:836.01px;font-size:20.5px;color:#333;transform:scaleX(0.9882);">Jan 12 1:52 pm</div>
<div class="t" style="left:605.91px;top:836.01px;font-size:20.5px;color:#333;transform:scaleX(1.0129);">Warning Lights ON #1(L)</div>
<div class="t" style="left:1039.51px;top:836.01px;font-size:20.5px;color:#333;transform:scaleX(1.0505);">Input Low Alert</div>
<svg class="a" style="left:1008px;top:832.06px" width="26" height="24" viewBox="0 0 26 24"><path fill-rule="evenodd" d="M12.5 2.1 L22.9 22.4 H2.1 Z M12.5 7.3 L6.1 19.9 H18.9 Z" fill="#1a1a1a"/><rect x="11.5" y="10.2" width="2.1" height="4.6" fill="#1a1a1a"/><rect x="11.4" y="16.5" width="2.3" height="2" fill="#1a1a1a"/></svg>
<div class="t" style="left:1386.55px;top:836.01px;font-size:20.5px;color:#333;transform:scaleX(0.9851);">Tech 2 ( w camera)</div>
<div class="t" style="left:1575.92px;top:836.01px;font-size:20.5px;color:#333;transform:scaleX(1.0149);">16...</div>
<div class="t" style="left:1780.59px;top:836.01px;font-size:20.5px;color:#333;transform:scaleX(0.9733);">Schaad Rd, Knoxville, TN 37931</div>
<div class="cb" style="top:895.23px"></div>
<div class="t" style="left:406.68px;top:897.18px;font-size:20.5px;color:#333;transform:scaleX(0.9882);">Jan 12 1:52 pm</div>
<div class="t" style="left:605.91px;top:897.18px;font-size:20.5px;color:#333;transform:scaleX(0.9968);">Warning Lights OFF #1(H)</div>
<div class="t" style="left:1039.48px;top:897.18px;font-size:20.5px;color:#333;transform:scaleX(1.0664);">Input High Alert</div>
<svg class="a" style="left:1008px;top:893.23px" width="26" height="24" viewBox="0 0 26 24"><path fill-rule="evenodd" d="M12.5 2.1 L22.9 22.4 H2.1 Z M12.5 7.3 L6.1 19.9 H18.9 Z" fill="#1a1a1a"/><rect x="11.5" y="10.2" width="2.1" height="4.6" fill="#1a1a1a"/><rect x="11.4" y="16.5" width="2.3" height="2" fill="#1a1a1a"/></svg>
<div class="t" style="left:1386.55px;top:897.18px;font-size:20.5px;color:#333;transform:scaleX(0.9851);">Tech 2 ( w camera)</div>
<div class="t" style="left:1575.92px;top:897.18px;font-size:20.5px;color:#333;transform:scaleX(1.0149);">17...</div>
<div class="t" style="left:1780.46px;top:897.18px;font-size:20.5px;color:#333;transform:scaleX(0.9965);">6707 TN-62, Knoxville, TN 37931</div>
<div class="a" style="left:350px;top:936.40px;width:1743px;height:61.17px;background:#f2f2f2"></div>
<div class="cb" style="top:956.40px"></div>
<div class="t" style="left:406.68px;top:958.35px;font-size:20.5px;color:#333;transform:scaleX(0.9882);">Jan 12 1:52 pm</div>
<div class="t" style="left:605.91px;top:958.35px;font-size:20.5px;color:#333;transform:scaleX(1.0129);">Warning Lights ON #1(L)</div>
<div class="t" style="left:1039.51px;top:958.35px;font-size:20.5px;color:#333;transform:scaleX(1.0505);">Input Low Alert</div>
<svg class="a" style="left:1008px;top:954.40px" width="26" height="24" viewBox="0 0 26 24"><path fill-rule="evenodd" d="M12.5 2.1 L22.9 22.4 H2.1 Z M12.5 7.3 L6.1 19.9 H18.9 Z" fill="#1a1a1a"/><rect x="11.5" y="10.2" width="2.1" height="4.6" fill="#1a1a1a"/><rect x="11.4" y="16.5" width="2.3" height="2" fill="#1a1a1a"/></svg>
<div class="t" style="left:1386.55px;top:958.35px;font-size:20.5px;color:#333;transform:scaleX(0.9851);">Tech 2 ( w camera)</div>
<div class="t" style="left:1576.47px;top:958.35px;font-size:20.5px;color:#333;transform:scaleX(1.0004);">20...</div>
<div class="t" style="left:1781.04px;top:958.35px;font-size:20.5px;color:#333;transform:scaleX(0.9762);">4321 Schaad Rd, Knoxville, TN</div>
<div class="cb" style="top:1017.57px"></div>
<div class="t" style="left:406.68px;top:1019.52px;font-size:20.5px;color:#333;transform:scaleX(0.9882);">Jan 12 1:52 pm</div>
<div class="t" style="left:605.91px;top:1019.52px;font-size:20.5px;color:#333;transform:scaleX(0.9968);">Warning Lights OFF #1(H)</div>
<div class="t" style="left:1039.48px;top:1019.52px;font-size:20.5px;color:#333;transform:scaleX(1.0664);">Input High Alert</div>
<svg class="a" style="left:1008px;top:1015.57px" width="26" height="24" viewBox="0 0 26 24"><path fill-rule="evenodd" d="M12.5 2.1 L22.9 22.4 H2.1 Z M12.5 7.3 L6.1 19.9 H18.9 Z" fill="#1a1a1a"/><rect x="11.5" y="10.2" width="2.1" height="4.6" fill="#1a1a1a"/><rect x="11.4" y="16.5" width="2.3" height="2" fill="#1a1a1a"/></svg>
<div class="t" style="left:1386.55px;top:1019.52px;font-size:20.5px;color:#333;transform:scaleX(0.9851);">Tech 2 ( w camera)</div>
<div class="t" style="left:1575.92px;top:1019.52px;font-size:20.5px;color:#333;transform:scaleX(1.0149);">19...</div>
<div class="t" style="left:1781.04px;top:1019.52px;font-size:20.5px;color:#333;transform:scaleX(0.9762);">4321 Schaad Rd, Knoxville, TN</div>
<div class="a" style="left:350px;top:1058.74px;width:1743px;height:61.17px;background:#f2f2f2"></div>
<div class="cb" style="top:1078.74px"></div>
<div class="t" style="left:406.68px;top:1080.69px;font-size:20.5px;color:#333;transform:scaleX(0.9882);">Jan 12 1:52 pm</div>
<div class="t" style="left:605.91px;top:1080.69px;font-size:20.5px;color:#333;transform:scaleX(1.0129);">Warning Lights ON #1(L)</div>
<div class="t" style="left:1039.51px;top:1080.69px;font-size:20.5px;color:#333;transform:scaleX(1.0505);">Input Low Alert</div>
<svg class="a" style="left:1008px;top:1076.74px" width="26" height="24" viewBox="0 0 26 24"><path fill-rule="evenodd" d="M12.5 2.1 L22.9 22.4 H2.1 Z M12.5 7.3 L6.1 19.9 H18.9 Z" fill="#1a1a1a"/><rect x="11.5" y="10.2" width="2.1" height="4.6" fill="#1a1a1a"/><rect x="11.4" y="16.5" width="2.3" height="2" fill="#1a1a1a"/></svg>
<div class="t" style="left:1386.55px;top:1080.69px;font-size:20.5px;color:#333;transform:scaleX(0.9851);">Tech 2 ( w camera)</div>
<div class="t" style="left:1576.69px;top:1080.69px;font-size:20.5px;color:#333;transform:scaleX(1.0155);">0 ...</div>
<div class="t" style="left:1780.46px;top:1080.69px;font-size:20.5px;color:#333;transform:scaleX(1.0013);">6707 TN-62, Knoxville, TN</div>
<div class="cb" style="top:1139.91px"></div>
<div class="t" style="left:406.68px;top:1141.86px;font-size:20.5px;color:#333;transform:scaleX(0.9882);">Jan 12 1:51 pm</div>
<div class="t" style="left:605.91px;top:1141.86px;font-size:20.5px;color:#333;transform:scaleX(0.9968);">Warning Lights OFF #1(H)</div>
<div class="t" style="left:1039.48px;top:1141.86px;font-size:20.5px;color:#333;transform:scaleX(1.0664);">Input High Alert</div>
<svg class="a" style="left:1008px;top:1137.91px" width="26" height="24" viewBox="0 0 26 24"><path fill-rule="evenodd" d="M12.5 2.1 L22.9 22.4 H2.1 Z M12.5 7.3 L6.1 19.9 H18.9 Z" fill="#1a1a1a"/><rect x="11.5" y="10.2" width="2.1" height="4.6" fill="#1a1a1a"/><rect x="11.4" y="16.5" width="2.3" height="2" fill="#1a1a1a"/></svg>
<div class="t" style="left:1386.55px;top:1141.86px;font-size:20.5px;color:#333;transform:scaleX(0.9851);">Tech 2 ( w camera)</div>
<div class="t" style="left:1576.47px;top:1141.86px;font-size:20.5px;color:#333;transform:scaleX(1.0004);">29...</div>
<div class="t" style="left:1781.04px;top:1141.86px;font-size:20.5px;color:#333;transform:scaleX(0.9762);">4321 Schaad Rd, Knoxville, TN</div>
<div class="a" style="left:350px;top:1181.08px;width:1743px;height:61.17px;background:#f2f2f2"></div>
<div class="cb" style="top:1201.08px"></div>
<div class="t" style="left:406.68px;top:1203.03px;font-size:20.5px;color:#333;transform:scaleX(0.9882);">Jan 12 1:51 pm</div>
<div class="t" style="left:605.91px;top:1203.03px;font-size:20.5px;color:#333;transform:scaleX(1.0129);">Warning Lights ON #1(L)</div>
<div class="t" style="left:1039.51px;top:1203.03px;font-size:20.5px;color:#333;transform:scaleX(1.0505);">Input Low Alert</div>
<svg class="a" style="left:1008px;top:1199.08px" width="26" height="24" viewBox="0 0 26 24"><path fill-rule="evenodd" d="M12.5 2.1 L22.9 22.4 H2.1 Z M12.5 7.3 L6.1 19.9 H18.9 Z" fill="#1a1a1a"/><rect x="11.5" y="10.2" width="2.1" height="4.6" fill="#1a1a1a"/><rect x="11.4" y="16.5" width="2.3" height="2" fill="#1a1a1a"/></svg>
<div class="t" style="left:1386.55px;top:1203.03px;font-size:20.5px;color:#333;transform:scaleX(0.9851);">Tech 2 ( w camera)</div>
<div class="t" style="left:1576.72px;top:1203.03px;font-size:20.5px;color:#333;transform:scaleX(0.9937);">37...</div>
<div class="t" style="left:1781.04px;top:1203.03px;font-size:20.5px;color:#333;transform:scaleX(0.9762);">4316 Schaad Rd, Knoxville, TN</div>
<div class="cb" style="top:1262.25px"></div>
<div class="t" style="left:406.68px;top:1264.20px;font-size:20.5px;color:#333;transform:scaleX(0.9882);">Jan 12 1:48 pm</div>
<div class="t" style="left:605.91px;top:1264.20px;font-size:20.5px;color:#333;transform:scaleX(0.9968);">Warning Lights OFF #1(H)</div>
<div class="t" style="left:1039.48px;top:1264.20px;font-size:20.5px;color:#333;transform:scaleX(1.0664);">Input High Alert</div>
<svg class="a" style="left:1008px;top:1260.25px" width="26" height="24" viewBox="0 0 26 24"><path fill-rule="evenodd" d="M12.5 2.1 L22.9 22.4 H2.1 Z M12.5 7.3 L6.1 19.9 H18.9 Z" fill="#1a1a1a"/><rect x="11.5" y="10.2" width="2.1" height="4.6" fill="#1a1a1a"/><rect x="11.4" y="16.5" width="2.3" height="2" fill="#1a1a1a"/></svg>
<div class="t" style="left:1386.55px;top:1264.20px;font-size:20.5px;color:#333;transform:scaleX(0.9851);">Tech 2 ( w camera)</div>
<div class="t" style="left:1576.37px;top:1264.20px;font-size:20.5px;color:#333;transform:scaleX(1.0999);">25</div>
<div class="t" style="left:1780.48px;top:1264.20px;font-size:20.5px;color:#333;transform:scaleX(0.9937);">2897-2899 Schaad Rd, Knoxvill</div>
<svg class="a" style="left:990px;top:645px" width="100" height="100" viewBox="990 645 100 100">
 <circle cx="1037.6" cy="693.7" r="34" fill="none" stroke="#eef52a" stroke-width="3.6"/>
 <path d="M1037.6 694.4 V718 L1042.6 713.3 L1046.3 721.5 L1049.7 720 L1046.2 712 L1053.6 712 Z" fill="#fff" stroke="#111" stroke-width="1.4" stroke-linejoin="round"/>
</svg>

<div class="a" style="left:0;top:1280px;width:2136px;height:30px;background:#f4f4f4"></div>
<div class="a" style="left:0;top:1310px;width:2136px;height:16px;background:#1c1c1c"></div>
<div class="a" style="left:61px;top:1310px;width:431px;height:16px;background:#f0f0f0;border-top:2px solid #b9b9b9"></div>
<div class="a" style="left:380px;top:1318px;width:106px;height:12px;background:#fff;border-radius:5px"></div>
<div class="a" style="left:1096px;top:1310px;width:67px;height:16px;background:#3b3b3b"></div>
<svg class="a" style="left:0;top:1310px" width="2136" height="16" viewBox="0 1310 2136 16">
 <path d="M601 1326 Q607 1316 613 1326 Z" fill="#1e88e5"/>
 <circle cx="757" cy="1333" r="14" fill="#26a69a"/>
 <path d="M826 1326 L831 1318 L836 1326 Z" fill="#2f6fd6"/>
 <rect x="897" y="1323" width="26" height="6" fill="#1976d2"/>
 <rect x="897" y="1321" width="26" height="2" fill="#3f8fe0"/>
 <circle cx="981" cy="1334" r="14" fill="#e53935"/>
 <circle cx="1056" cy="1328" r="6" fill="#7e57c2"/>
 <circle cx="1130" cy="1332" r="13" fill="none" stroke="#8fb5d6" stroke-width="2.5"/>
 <circle cx="1412" cy="1330" r="7" fill="#e53935"/>
</svg>
<div class="t" style="left:1984px;top:1316px;font-size:19px;color:#fff">3:07 PM</div>

</body></html>
